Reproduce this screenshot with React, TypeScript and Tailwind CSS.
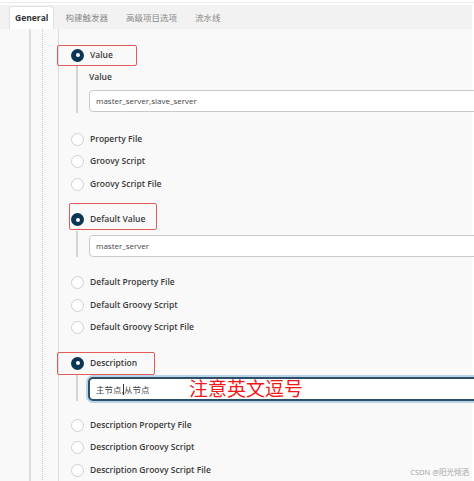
import React from "react";

const font = { fontFamily: '"Open Sans", "Noto Sans", "Noto Sans CJK SC", sans-serif' };

function Radio({ checked }: { checked?: boolean }) {
  return checked ? (
    <span className="w-[13px] h-[13px] rounded-full bg-[#0b3554] flex items-center justify-center shrink-0">
      <span className="w-[4px] h-[4px] rounded-full bg-white" />
    </span>
  ) : (
    <span className="w-[13px] h-[13px] rounded-full border-[1.5px] border-[#d0d0d0] bg-white shrink-0" />
  );
}

function Row({ label, checked, h = "h-[22.5px]" }: { label: string; checked?: boolean; h?: string }) {
  return (
    <div className={`flex items-center gap-[6px] ${h}`}>
      <Radio checked={checked} />
      <span className="text-[8.5px] font-semibold text-[#3a3a3a]">{label}</span>
    </div>
  );
}

export default function App() {
  return (
    <div className="relative w-[474px] h-[481px] overflow-hidden bg-white flex flex-col" style={font}>
      <div className="h-[3px] shrink-0 border-t border-[#ececec] mt-[2px]" />
      <div className="h-[24px] shrink-0 bg-[#f2f2f2] flex items-end pl-[9px] mr-[2px]">
        <div className="h-[24px] -mb-[1px] px-[5px] bg-white border border-b-0 border-[#e2e2e2] rounded-t-[4px] flex items-center text-[8.5px] font-bold text-[#333]">
          General
        </div>
        <div className="h-full flex items-center gap-[18px] pl-[11px] text-[8.5px] text-[#888]" style={{ fontFamily: '"Noto Sans CJK SC", sans-serif' }}>
          <span>构建触发器</span>
          <span>高级项目选项</span>
          <span>流水线</span>
        </div>
      </div>
      <div className="flex-1 flex bg-[#f9f9f9] mr-[2px]">
        <div className="w-[29px] shrink-0" />
        <div className="w-[2px] shrink-0 bg-[#dedede]" />
        <div className="w-[11px] shrink-0" />
        <div className="w-0 shrink-0 border-l border-dotted border-[#c8c8c8]" />
        <div className="w-[15px] shrink-0" />
        <div className="w-px shrink-0 bg-[#dcdcdc]" />
        <div className="flex-1 min-w-0 pl-[12px] pt-[15px] flex flex-col">
          <Row label="Value" checked h="h-[22px]" />
          <div className="ml-[5px] border-l-2 border-[#d4d4d4] pl-[11px] pb-[1px]">
            <div className="h-[22px] flex items-center text-[8.5px] font-semibold text-[#3a3a3a]">Value</div>
            <div className="mt-[2px] h-[22px] -mr-[20px] bg-white border border-[#cacaca] rounded-l-[4px] flex items-center pl-[6px] text-[8px] text-[#444]">
              master_server,slave_server
            </div>
          </div>
          <div className="h-[15px]" />
          <Row label="Property File" />
          <Row label="Groovy Script" />
          <Row label="Groovy Script File" />
          <div className="h-[13px]" />
          <Row label="Default Value" checked h="h-[22px]" />
          <div className="ml-[5px] border-l-2 border-[#d4d4d4] pl-[11px] pt-[4px]">
            <div className="h-[22px] -mr-[20px] bg-white border border-[#cacaca] rounded-l-[4px] flex items-center pl-[6px] text-[8px] text-[#444]">
              master_server
            </div>
          </div>
          <div className="h-[15px]" />
          <Row label="Default Property File" />
          <Row label="Default Groovy Script" />
          <Row label="Default Groovy Script File" />
          <div className="h-[13px]" />
          <Row label="Description" checked h="h-[22px]" />
          <div className="ml-[5px] border-l-2 border-[#d4d4d4] pl-[10px] pt-[3px]">
            <div
              className="h-[24px] -mr-[20px] bg-white border-2 border-[#2c4e66] rounded-l-[5px] ring-2 ring-[#b8d4e8] flex items-center pl-[6px] text-[8.5px] text-[#444]"
              style={{ fontFamily: '"Noto Sans CJK SC", sans-serif' }}
            >
              主节点,<span className="inline-block w-px h-[11px] bg-[#333] -ml-[1px]" />从节点
            </div>
          </div>
          <div className="h-[13px]" />
          <Row label="Description Property File" />
          <Row label="Description Groovy Script" />
          <Row label="Description Groovy Script File" />
        </div>
      </div>

      {/* annotations */}
      <div className="absolute left-[57px] top-[45px] w-[80px] h-[21px] border border-[#e35b5b] rounded-[2px]" />
      <div className="absolute left-[69px] top-[203px] w-[88px] h-[27px] border border-[#e35b5b] rounded-[2px]" />
      <div className="absolute left-[57px] top-[352px] w-[98px] h-[23px] border border-[#e35b5b] rounded-[2px]" />
      <div className="absolute left-[189px] top-[376px] text-[19px] leading-[24px] text-[#f01818]" style={{ fontFamily: '"Noto Sans CJK SC", sans-serif' }}>
        注意英文逗号
      </div>
      <div className="absolute right-[5px] bottom-[3px] text-[7.5px] text-[#a8a8a8]" style={{ fontFamily: '"Noto Sans", "Noto Sans CJK SC", sans-serif' }}>
        CSDN @阳光倾洒
      </div>
    </div>
  );
}
